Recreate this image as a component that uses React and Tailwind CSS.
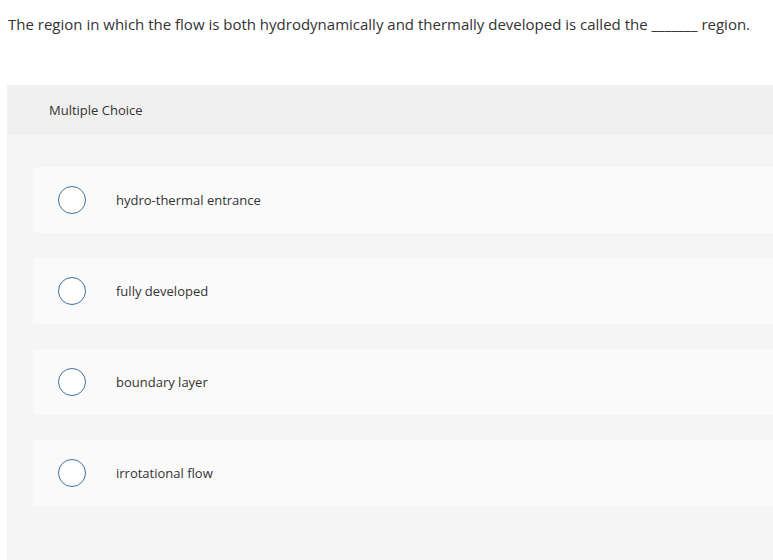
import React from "react";

const options = [
    "hydro-thermal entrance",
    "fully developed",
    "boundary layer",
    "irrotational flow",
];

const Radio = () => (
    <span className="block w-[28px] h-[28px] rounded-full border-[1.5px] border-[#3f6f9e] bg-white shrink-0"></span>
);

export default function App() {
    return (
        <div className="w-[773px] h-[560px] overflow-hidden bg-white font-['Open_Sans','Liberation_Sans',sans-serif] text-[#333]">
            {/* Question prompt */}
            <p className="pl-[8px] pt-[14px] text-[15px] leading-[20px]">
                The region in which the flow is both hydrodynamically and thermally developed is called the _______ region.
            </p>

            {/* Answer panel */}
            <div className="ml-[7px] mt-[51px] w-[800px] bg-[#f5f5f5] pb-[80px]">
                <div className="h-[50px] bg-[#f0f0f0] pl-[42px] flex items-center">
                    <span className="text-[13px] pt-[2px]">Multiple Choice</span>
                </div>
                <div className="pt-[32px] pl-[26px] flex flex-col gap-[25px]">
                    {options.map((opt) => (
                        <label key={opt} className="h-[66px] bg-[#fafafa] rounded-[3px] flex items-center pl-[25px] gap-[30px] cursor-pointer">
                            <Radio />
                            <span className="text-[13px] pt-[2px]">{opt}</span>
                        </label>
                    ))}
                </div>
            </div>
        </div>
    );
}
